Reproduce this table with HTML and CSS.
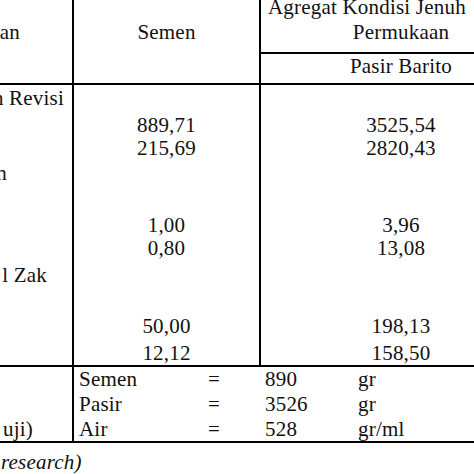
FILE: index.html
```html
<!DOCTYPE html>
<html>
<head>
<meta charset="utf-8">
<link rel="stylesheet" href="styles.css">
</head>
<body>
<div class="sheet">
  <div class="head">
    <div class="c1"><div class="lbl lbl-an">an</div></div>
    <div class="c2"><div class="hd">Semen</div></div>
    <div class="c3">
      <div class="agg">
        <div class="agg-1">Agregat Kondisi Jenuh</div>
        <div class="agg-2">Permukaan</div>
      </div>
      <div class="sub">Pasir Barito</div>
    </div>
  </div>
  <div class="body">
    <div class="c1 rows">
      <div class="lbl lbl-rev r1">n Revisi</div>
      <div class="lbl lbl-n r4">n</div>
      <div class="lbl lbl-zak r8">l Zak</div>
    </div>
    <div class="c2 rows">
      <div class="val r2">889,71</div>
      <div class="val r3">215,69</div>
      <div class="val r6">1,00</div>
      <div class="val r7">0,80</div>
      <div class="val r10">50,00</div>
      <div class="val r11">12,12</div>
    </div>
    <div class="c3 rows">
      <div class="val r2">3525,54</div>
      <div class="val r3">2820,43</div>
      <div class="val r6">3,96</div>
      <div class="val r7">13,08</div>
      <div class="val r10">198,13</div>
      <div class="val r11">158,50</div>
    </div>
  </div>
  <div class="foot">
    <div class="c1 foot-rows">
      <div class="lbl lbl-uji f3">uji)</div>
    </div>
    <div class="mix">
      <div>Semen</div><div>=</div><div>890</div><div>gr</div>
      <div>Pasir</div><div>=</div><div>3526</div><div>gr</div>
      <div>Air</div><div>=</div><div>528</div><div>gr/ml</div>
    </div>
  </div>
  <div class="cap">research)</div>
</div>
</body>
</html>
```
FILE: styles.css
```css
html, body {
  margin: 0;
  overflow: hidden;
  background: #fff;
}
body {
  font-family: "Liberation Serif", Tinos, "Times New Roman", "DejaVu Serif", serif;
  font-size: 21px;
  letter-spacing: 0.2px;
  color: #111;
}
.sheet {
  width: 541px;
}
.head, .body, .foot {
  display: flex;
}
.head {
  height: 83px;
  border-bottom: 2px solid #000;
}
.c1 {
  width: 72px;
  flex: none;
  border-right: 2px solid #000;
}
.c2 {
  width: 185px;
  flex: none;
  border-right: 2px solid #000;
}
.c3 {
  width: 280px;
  flex: none;
}
.hd {
  padding-top: 20px;
  line-height: 24px;
  text-align: center;
}
.lbl {
  display: flex;
  justify-content: flex-end;
  white-space: nowrap;
  line-height: 24px;
}
.lbl-an { padding-top: 20px; padding-right: 52px; }
.lbl-rev { padding-right: 8px; }
.lbl-n { padding-right: 65px; }
.lbl-zak { padding-right: 25px; }
.lbl-uji { padding-right: 39px; line-height: 25px; }

.agg {
  height: 57px;
  border-bottom: 2px solid #000;
  line-height: 24.5px;
  white-space: nowrap;
}
.agg-1 {
  margin-top: -5px;
  padding-left: 7px;
}
.agg-2 {
  text-align: center;
}
.sub {
  line-height: 24px;
  text-align: center;
}

.body {
  height: 280px;
  border-bottom: 2px solid #000;
}
.rows {
  display: grid;
  grid-template-columns: minmax(0, 1fr);
  grid-template-rows: 27px 23px 25px 26px 26px 23px 27px 25.5px 25.5px 27px 1fr;
  padding-top: 1px;
  line-height: 24px;
}
.r1 { grid-row: 1; }
.r2 { grid-row: 2; }
.r3 { grid-row: 3; }
.r4 { grid-row: 4; }
.r6 { grid-row: 6; }
.r7 { grid-row: 7; }
.r8 { grid-row: 8; }
.r10 { grid-row: 10; }
.r11 { grid-row: 11; }
.val {
  text-align: center;
}

.foot {
  height: 74px;
  border-bottom: 2px solid #000;
}
.foot-rows {
  display: grid;
  grid-template-columns: minmax(0, 1fr);
  grid-template-rows: 25px 25px 25px;
}
.f3 { grid-row: 3; }
.mix {
  display: grid;
  grid-template-columns: 129px 57px 93px 1fr;
  grid-auto-rows: 25px;
  line-height: 25px;
  padding-left: 5px;
  white-space: nowrap;
}
.cap {
  margin-top: 7px;
  line-height: 25px;
  font-style: italic;
  padding-left: 1px;
  white-space: nowrap;
}
```
